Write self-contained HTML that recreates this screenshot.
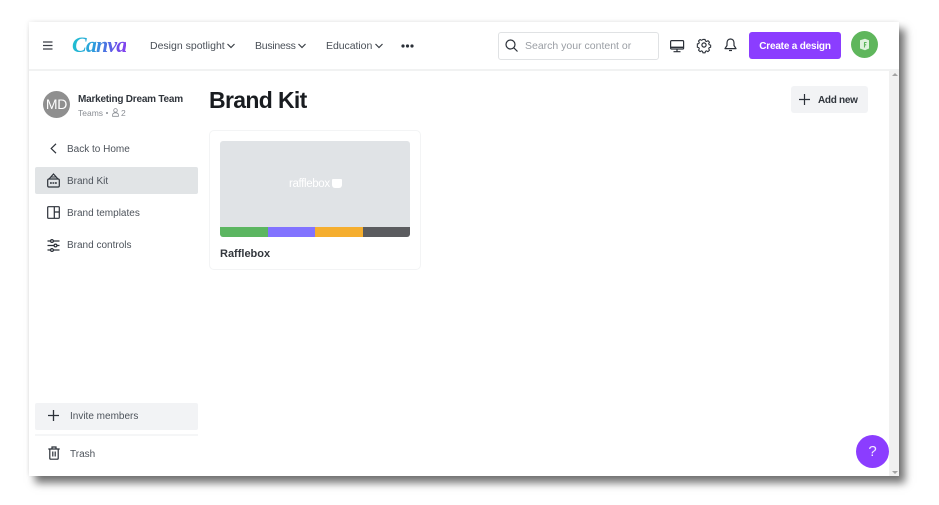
<!DOCTYPE html>
<html>
<head>
<meta charset="utf-8">
<style>
html,body{margin:0;padding:0;width:939px;height:505px;overflow:hidden;background:#fff;font-family:"Liberation Sans",sans-serif}
.a{position:absolute;white-space:nowrap}
#win{position:absolute;left:29px;top:22px;width:870px;height:454px;background:#fff;box-shadow:6px 7px 8px rgba(0,0,0,.55),0 -1px 5px rgba(0,0,0,.05),-1px 0 5px rgba(0,0,0,.05)}
#root{position:absolute;left:0;top:0;width:939px;height:505px;filter:blur(.3px)}
svg{position:absolute;overflow:visible;fill:none;stroke:#2b3038;stroke-width:1.2}
.nav{font-size:10.5px;color:#4a5058;top:39px;line-height:14px}
.side{font-size:10px;color:#4d535b;line-height:14px}
</style>
</head>
<body>
<div id="root">
<div id="win"></div>

<!-- header -->
<div class="a" style="left:29px;top:69px;width:870px;height:2px;background:#f1f2f2"></div>
<!-- scrollbar -->
<div class="a" style="left:889px;top:71px;width:10px;height:405px;background:#f1f1f1"></div>
<div class="a" style="left:892px;top:73px;width:0;height:0;border-left:3px solid transparent;border-right:3px solid transparent;border-bottom:3px solid #a3a3a3"></div>
<div class="a" style="left:892px;top:471px;width:0;height:0;border-left:3px solid transparent;border-right:3px solid transparent;border-top:3px solid #a3a3a3"></div>

<!-- hamburger -->
<svg style="left:43px;top:41px" width="10" height="9"><path d="M0 1H9.5M0 4.5H9.5M0 8H9.5" stroke="#3a3f46" stroke-width="1.2"/></svg>
<!-- logo -->
<div class="a" style="left:72px;top:30px;font-family:'Liberation Serif',serif;font-style:italic;font-weight:700;font-size:22px;line-height:30px;letter-spacing:-.85px;background:linear-gradient(100deg,#1fc3cf 0%,#2a9fdc 40%,#6a4fe8 80%,#8a3ff0 100%);-webkit-background-clip:text;background-clip:text;color:transparent">Canva</div>

<div class="a nav" style="left:150px;letter-spacing:0">Design spotlight</div>
<svg style="left:227px;top:43px" width="8" height="6"><path d="M.5 1L4 4.5 7.5 1" stroke="#3a3f46"/></svg>
<div class="a nav" style="left:255px;letter-spacing:-.25px">Business</div>
<svg style="left:298px;top:43px" width="8" height="6"><path d="M.5 1L4 4.5 7.5 1" stroke="#3a3f46"/></svg>
<div class="a nav" style="left:326px;letter-spacing:-.05px">Education</div>
<svg style="left:375px;top:43px" width="8" height="6"><path d="M.5 1L4 4.5 7.5 1" stroke="#3a3f46"/></svg>
<svg style="left:401px;top:44px" width="13" height="4"><g fill="#2b3038" stroke="none"><circle cx="2" cy="2" r="1.6"/><circle cx="6.5" cy="2" r="1.6"/><circle cx="11" cy="2" r="1.6"/></g></svg>

<!-- search -->
<div class="a" style="left:498px;top:32px;width:159px;height:26px;border:1px solid #e0e2e4;border-radius:3px;background:#fff"></div>
<svg style="left:505px;top:39px" width="13" height="13"><circle cx="5.5" cy="5.5" r="4.5"/><path d="M8.8 8.8L12.5 12.5"/></svg>
<div class="a" style="left:525px;top:40px;font-size:10.5px;line-height:13px;color:#9a9ea4;width:108px;overflow:hidden">Search your content or Canva</div>

<!-- desktop icon -->
<svg style="left:670px;top:40px" width="14" height="13"><rect x=".6" y=".6" width="13" height="8.4" rx="1"/><path d="M.8 7.3H13.2" stroke-width="1.4"/><path d="M7 9V11.4M3.5 11.7H10.5"/></svg>
<!-- gear -->
<svg style="left:697px;top:38px" width="14" height="14" viewBox="0 0 14 14"><circle cx="7" cy="7" r="2.1"/><path d="M5.8.8h2.4l.4 1.7 1.3.6 1.5-.9 1.7 1.7-.9 1.5.6 1.3 1.6.4v2.4l-1.6.4-.6 1.3.9 1.5-1.7 1.7-1.5-.9-1.3.6-.4 1.6H5.8l-.4-1.6-1.3-.6-1.5.9-1.7-1.7.9-1.5-.6-1.3-1.6-.4V5.8l1.6-.4.6-1.3-.9-1.5 1.7-1.7 1.5.9 1.3-.6z" stroke-linejoin="round" transform="translate(.7 .7) scale(.9)"/></svg>
<!-- bell -->
<svg style="left:724px;top:38px" width="13" height="14" viewBox="0 0 13 14"><path d="M6.5 1C4.2 1 3 2.8 3 5V7.5L1 10.6H12L10 7.5V5C10 2.8 8.8 1 6.5 1Z" stroke-linejoin="round"/><path d="M5 12.5H8"/></svg>

<!-- create button -->
<div class="a" style="left:749px;top:32px;width:92px;height:27px;background:#8b3dff;border-radius:3px;color:#fff;font-size:10px;font-weight:700;line-height:29px;text-align:center;letter-spacing:-.2px">Create a design</div>
<!-- avatar -->
<div class="a" style="left:851px;top:31px;width:27px;height:27px;border-radius:50%;background:#5fb65c"></div>
<svg style="left:859px;top:38px" width="11" height="13" viewBox="0 0 11 13"><path d="M1 2.2L6 .8 10 2.2V10.5L6 12.2 1 10.5Z" fill="#dff2dd" stroke="none"/><path d="M5 4.5H7.6M5.5 4.5V9.5M5.5 6.8H7.2" stroke="#5fb65c" stroke-width="1.1"/></svg>

<!-- team -->
<div class="a" style="left:43px;top:91px;width:27px;height:27px;border-radius:50%;background:#8f8f8f;color:#fff;font-size:14px;line-height:27px;text-align:center;letter-spacing:-.2px">MD</div>
<div class="a" style="left:78px;top:93px;font-size:10px;font-weight:700;line-height:14px;color:#30353c;letter-spacing:-.22px">Marketing Dream Team</div>
<div class="a" style="left:78px;top:107px;font-size:8.5px;line-height:12px;color:#8a8e94">Teams</div>
<div class="a" style="left:106px;top:112px;width:2px;height:2px;border-radius:50%;background:#8a8e94"></div>
<svg style="left:112px;top:108px" width="7" height="9" viewBox="0 0 7 9"><circle cx="3.5" cy="2.4" r="1.8" stroke="#8a8e94" stroke-width=".8"/><path d="M.6 8.3V7C.6 5.6 1.8 4.8 3.5 4.8S6.4 5.6 6.4 7V8.3Z" stroke="#8a8e94" stroke-width=".8"/></svg>
<div class="a" style="left:121px;top:107px;font-size:8.5px;line-height:12px;color:#8a8e94">2</div>

<!-- sidebar -->
<svg style="left:50px;top:143px" width="7" height="11"><path d="M6 .8L1.2 5.5 6 10.2"/></svg>
<div class="a side" style="left:67px;top:143px">Back to Home</div>

<div class="a" style="left:35px;top:167px;width:163px;height:27px;background:#e1e4e6;border-radius:2px"></div>
<svg style="left:47px;top:173px" width="13" height="15" viewBox="0 0 13 15"><rect x=".7" y="6" width="11.6" height="8" rx="1.2"/><path d="M2 6L6.5 1 11 6M4 4H9" stroke-width="1.1"/><path d="M3 10H10" stroke-width="1.6" stroke-dasharray="1.8 .7"/></svg>
<div class="a side" style="left:67px;top:175px">Brand Kit</div>

<svg style="left:47px;top:206px" width="13" height="13"><rect x=".7" y=".7" width="11.6" height="11.6" rx=".8"/><path d="M7.3.7V12.3M7.3 6H12.3"/></svg>
<div class="a side" style="left:67px;top:207px">Brand templates</div>

<svg style="left:47px;top:239px" width="13" height="13"><path d="M.5 2H12.5M.5 6.5H12.5M.5 11H12.5"/><circle cx="5" cy="2" r="1.4" fill="#fff"/><circle cx="8.5" cy="6.5" r="1.4" fill="#fff"/><circle cx="5" cy="11" r="1.4" fill="#fff"/></svg>
<div class="a side" style="left:67px;top:239px">Brand controls</div>

<div class="a" style="left:35px;top:403px;width:163px;height:27px;background:#f2f3f5;border-radius:2px"></div>
<svg style="left:48px;top:410px" width="11" height="11"><path d="M5.5 0V11M0 5.5H11" stroke-width="1.3"/></svg>
<div class="a side" style="left:70px;top:410px">Invite members</div>
<div class="a" style="left:35px;top:434px;width:163px;height:2px;background:#f5f6f7"></div>
<svg style="left:48px;top:446px" width="12" height="14" viewBox="0 0 12 14"><path d="M.3 3H11.7M4 3V1H8V3M1.8 3V12.2C1.8 12.8 2.2 13.2 2.8 13.2H9.2C9.8 13.2 10.2 12.8 10.2 12.2V3M4.8 5.5V10.5M7.2 5.5V10.5"/></svg>
<div class="a side" style="left:70px;top:448px">Trash</div>

<!-- main -->
<div class="a" style="left:209px;top:85px;font-size:23px;line-height:30px;font-weight:700;color:#191c20;letter-spacing:-.65px">Brand Kit</div>

<div class="a" style="left:791px;top:86px;width:77px;height:27px;background:#f2f3f5;border-radius:3px"></div>
<svg style="left:799px;top:94px" width="11" height="11"><path d="M5.5 0V11M0 5.5H11" stroke-width="1.2"/></svg>
<div class="a" style="left:818px;top:94px;font-size:10px;font-weight:700;line-height:14px;color:#30353c;letter-spacing:-.3px">Add new</div>

<!-- card -->
<div class="a" style="left:209px;top:130px;width:210px;height:138px;border:1px solid #f3f4f5;border-radius:5px;background:#fff"></div>
<div class="a" style="left:220px;top:141px;width:190px;height:96px;border-radius:3px;overflow:hidden;background:#e0e3e6">
  <div class="a" style="left:69px;top:36px;font-size:11.5px;line-height:14px;color:#fff;letter-spacing:-.35px">rafflebox</div>
  <div class="a" style="left:112px;top:38px;width:10px;height:9px;border-radius:1px 1px 3px 3px;background:#fff"></div>
  <div class="a" style="left:0;top:86px;width:48px;height:10px;background:#5cb661"></div>
  <div class="a" style="left:48px;top:86px;width:47px;height:10px;background:#8273ff"></div>
  <div class="a" style="left:95px;top:86px;width:48px;height:10px;background:#f5ae2f"></div>
  <div class="a" style="left:143px;top:86px;width:47px;height:10px;background:#5b5c5f"></div>
</div>
<div class="a" style="left:220px;top:247px;font-size:11px;font-weight:700;line-height:14px;color:#33373d">Rafflebox</div>

<!-- help -->
<div class="a" style="left:856px;top:435px;width:33px;height:33px;border-radius:50%;background:#8b3dff;color:#f3ebff;font-size:15px;line-height:33px;text-align:center">?</div>
</div>
</body>
</html>
